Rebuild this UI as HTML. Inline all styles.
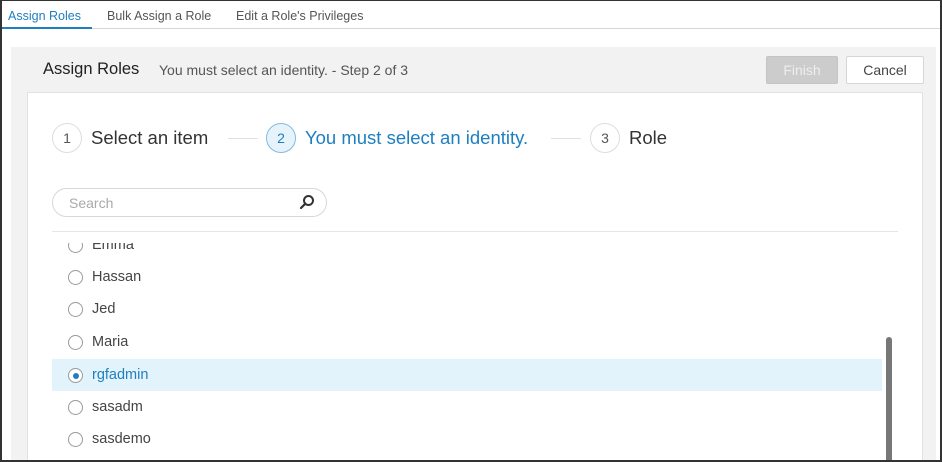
<!DOCTYPE html>
<html><head><meta charset="utf-8"><style>
*{box-sizing:border-box;margin:0;padding:0}
html,body{width:942px;height:462px;overflow:hidden;background:#fff;font-family:"Liberation Sans",sans-serif}
.wrap{position:relative;width:942px;height:462px;overflow:hidden}
.frame{position:absolute;left:0;top:0;width:942px;height:462px;border:1px solid #333;border-width:1px 2px 2px 2px;z-index:10;pointer-events:none}
.abs{position:absolute}
.tab{position:absolute;top:9px;font-size:12.5px;color:#555}
.panel{position:absolute;left:11px;top:47px;width:925px;height:420px;background:#f2f2f2}
.card{position:absolute;left:27px;top:92px;width:896px;height:380px;background:#fff;border:1px solid #e2e2e2}
.circ{position:absolute;width:30px;height:30px;border:1px solid #ddd;border-radius:50%;text-align:center;line-height:28px;font-size:14px;color:#555;background:#fff}
.st{position:absolute;font-size:18.5px;color:#333;top:127px}
.ln{position:absolute;top:138px;height:1px;background:#e0e0e0;width:30px}
.row{position:absolute;left:52px;width:830px;height:32px}
.row .r{position:absolute;left:16px;top:9px;width:15px;height:15px;border:1px solid #999;border-radius:50%;background:#fff}
.row .t{position:absolute;left:40px;top:8px;font-size:14.5px;color:#444}
</style></head><body><div class="wrap">
<div class="frame"></div>
<div class="tab" style="left:8px;color:#1e7fc0">Assign Roles</div>
<div class="abs" style="left:0;top:27px;width:92px;height:2px;background:#1e7fc0"></div>
<div class="tab" style="left:107px">Bulk Assign a Role</div>
<div class="tab" style="left:236px">Edit a Role's Privileges</div>
<div class="abs" style="left:92px;top:28px;width:850px;height:1px;background:#d6d6d6"></div>
<div class="panel"></div>
<div class="abs" style="left:43px;top:60px;font-size:16.5px;color:#222">Assign Roles</div>
<div class="abs" style="left:159px;top:62px;font-size:14px;color:#555">You must select an identity. - Step 2 of 3</div>
<div class="abs" style="left:766px;top:56px;width:72px;height:28px;background:#ccc;border:1px solid #c4c4c4;border-radius:2px;color:#eee;font-size:14px;text-align:center;line-height:26px">Finish</div>
<div class="abs" style="left:846px;top:56px;width:78px;height:28px;background:#fff;border:1px solid #d6d6d6;border-radius:2px;color:#444;font-size:14px;text-align:center;line-height:26px">Cancel</div>
<div class="card"></div>
<div class="circ" style="left:52px;top:123px">1</div>
<div class="st" style="left:91px">Select an item</div>
<div class="ln" style="left:228px"></div>
<div class="circ" style="left:266px;top:123px;border-color:#7fbce3;background:#e6f3fb;color:#1e7fc0">2</div>
<div class="st" style="left:305px;color:#1e7fc0">You must select an identity.</div>
<div class="ln" style="left:551px"></div>
<div class="circ" style="left:590px;top:123px">3</div>
<div class="st" style="left:629px">Role</div>
<div class="abs" style="left:52px;top:188px;width:275px;height:29px;border:1px solid #d8d8d8;border-radius:15px"></div>
<div class="abs" style="left:69px;top:195px;font-size:14px;color:#aaa">Search</div>
<svg class="abs" style="left:299px;top:194px" width="16" height="16" viewBox="0 0 16 16"><circle cx="9.5" cy="6.5" r="4.5" fill="none" stroke="#333" stroke-width="2"/><path d="M6.3 9.7L2 14" stroke="#333" stroke-width="2.2" stroke-linecap="round"/></svg>
<div class="abs" style="left:52px;top:231px;width:846px;height:1px;background:#e6e6e6"></div>
<div class="abs" style="left:52px;top:232px;width:830px;height:230px;overflow:hidden">
 <div class="row" style="left:0;top:-3px"><div class="r"></div><div class="t">Emma</div></div>
 <div class="row" style="left:0;top:29px"><div class="r"></div><div class="t">Hassan</div></div>
 <div class="row" style="left:0;top:61px"><div class="r"></div><div class="t">Jed</div></div>
 <div class="row" style="left:0;top:94px"><div class="r"></div><div class="t">Maria</div></div>
 <div class="row" style="left:0;top:127px;background:#e3f3fc"><div class="r"><div style="position:absolute;left:3.5px;top:3.5px;width:6px;height:6px;border-radius:50%;background:#1e7fc0"></div></div><div class="t" style="color:#1e7fc0">rgfadmin</div></div>
 <div class="row" style="left:0;top:159px"><div class="r"></div><div class="t">sasadm</div></div>
 <div class="row" style="left:0;top:191px"><div class="r"></div><div class="t">sasdemo</div></div>
</div>
<div class="abs" style="left:52px;top:232px;width:830px;height:11px;background:#fff"></div>
<div class="abs" style="left:886px;top:337px;width:6px;height:130px;background:#777;border-radius:3px"></div>
</div></body></html>
